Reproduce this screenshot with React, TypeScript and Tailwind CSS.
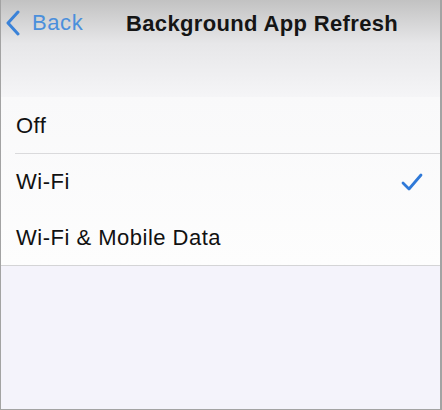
import React from "react";

export default function App() {
  const font = { fontFamily: '"Liberation Sans", Arial, sans-serif' };
  return (
    <div
      className="w-[442px] h-[410px] flex flex-col border-l border-r-2 border-b border-[#a3a3a3] bg-[#f4f3fb] overflow-hidden"
      style={font}
    >
      <div className="h-[97px] shrink-0 bg-gradient-to-b from-[#c2c2c2] via-[#e7e7e9] via-45% to-[#f5f5f7] flex flex-col">
        <div className="h-[46px] flex items-center relative">
          <div className="flex items-center pl-[4px]">
            <svg width="16" height="26" viewBox="0 0 16 26" className="mr-[11px]">
              <path d="M13 2 L3 13 L13 24" fill="none" stroke="#3a82d8" strokeWidth="3" strokeLinecap="round" strokeLinejoin="round" />
            </svg>
            <span className="text-[22px] leading-none tracking-[0.6px] text-[#4b8fdc]">Back</span>
          </div>
          <div className="absolute left-[125px] top-0 h-[46px] flex items-center text-[22px] font-bold text-[#151515] tracking-[0.35px]">
            Background App Refresh
          </div>
        </div>
      </div>
      <div className="bg-gradient-to-b from-[#f9f9fa] to-[#fdfdfd] border-b border-[#d4d4d6] text-[22px] tracking-[0.5px] text-[#111]">
        <div className="h-[56px] flex items-center pl-[15px]">
          <div className="flex-1 h-full flex items-center">Off</div>
        </div>
        <div className="ml-[14px] h-px bg-[#dadadc]" />
        <div className="h-[55px] flex items-center pl-[15px] pr-[17px]">
          <div className="flex-1">Wi-Fi</div>
          <svg width="22" height="18" viewBox="0 0 22 18">
            <path d="M2 10 L8 16 L20 2" fill="none" stroke="#2f79d8" strokeWidth="2.8" strokeLinecap="round" strokeLinejoin="round" />
          </svg>
        </div>
        <div className="h-[56px] flex items-center pl-[15px]">
          <div className="flex-1">Wi-Fi &amp; Mobile Data</div>
        </div>
      </div>
      <div className="flex-1 bg-[#f4f3fb]" />
    </div>
  );
}
